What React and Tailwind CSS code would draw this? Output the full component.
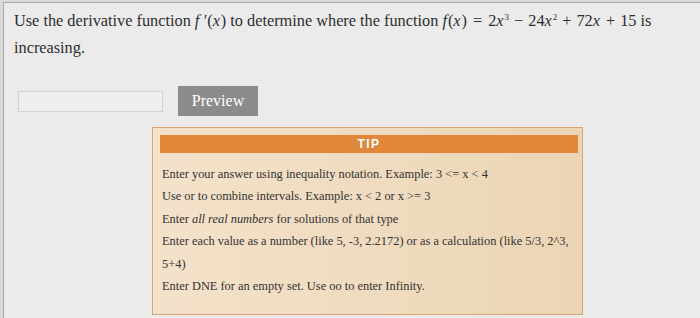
import React from 'react';

const serif = { fontFamily: '"Liberation Serif", "Times New Roman", serif' };

function MathVar({ children }) {
    return <i className="italic pr-[1px]" style={serif}>{children}</i>;
}

function Op({ children, wide }) {
    return <span className={wide ? 'mx-[6px]' : 'mx-[5px]'}>{children}</span>;
}

const tips = [
    <>Enter your answer using inequality notation. Example: 3 &lt;= x &lt; 4</>,
    <>Use or to combine intervals. Example: x &lt; 2 or x &gt;= 3</>,
    <>Enter <i>all real numbers</i> for solutions of that type</>,
    <>Enter each value as a number (like 5, -3, 2.2172) or as a calculation (like 5/3, 2^3, 5+4)</>,
    <>Enter DNE for an empty set. Use oo to enter Infinity.</>,
];

export default function App() {
    return (
        <div className="w-[700px] h-[318px] overflow-hidden bg-[#d9d9d9] pt-[2px]" style={serif}>
            <div className="h-full ml-[3px] border-l border-t border-[#a9a9a9] bg-[#ebebeb] pl-[10px] pt-[4px] text-[#2e2e2e]">
                {/* Question */}
                <p className="text-[16.3px] leading-[27px] w-[660px]">
                    Use the derivative function <MathVar>f</MathVar>&thinsp;′(<MathVar>x</MathVar>) to determine where the function{' '}
                    <span className="whitespace-nowrap">
                        <MathVar>f</MathVar>(<MathVar>x</MathVar>)<Op wide>=</Op>2<MathVar>x</MathVar><sup className="text-[9px] -top-[0.7em]">3</sup><Op>−</Op>24<MathVar>x</MathVar><sup className="text-[9px] -top-[0.7em]">2</sup><Op>+</Op>72<MathVar>x</MathVar><Op>+</Op>15
                    </span>{' '}is increasing.
                </p>

                {/* Answer row */}
                <div className="flex items-center mt-[25px] pl-[4px]">
                    <div className="w-[145px] h-[21px] border border-[#d2d2d2] bg-[#efefef]" />
                    <button className="ml-[15px] w-[80px] h-[30px] bg-[#8b8b8b] text-white text-[16px]" style={serif}>
                        Preview
                    </button>
                </div>

                {/* Tip */}
                <div className="ml-[138px] mt-[11px] w-[431px] h-[188px] border border-[#d7a477] bg-gradient-to-r from-[#f3e2ca] to-[#ecd5b5] pt-[7px] pl-[7px] pr-[4px]">
                    <div className="h-[18px] bg-[#e0873a] flex items-center justify-center">
                        <span className="text-white text-[12px] font-bold tracking-[0.12em]" style={{ fontFamily: '"Liberation Sans", Arial, sans-serif' }}>TIP</span>
                    </div>
                    <div className="pl-[2px] pt-[10px] pr-[6px] text-[12.4px] leading-[22.4px] text-[#333]">
                        {tips.map((t, i) => (
                            <p key={i}>{t}</p>
                        ))}
                    </div>
                </div>
            </div>
        </div>
    );
}
